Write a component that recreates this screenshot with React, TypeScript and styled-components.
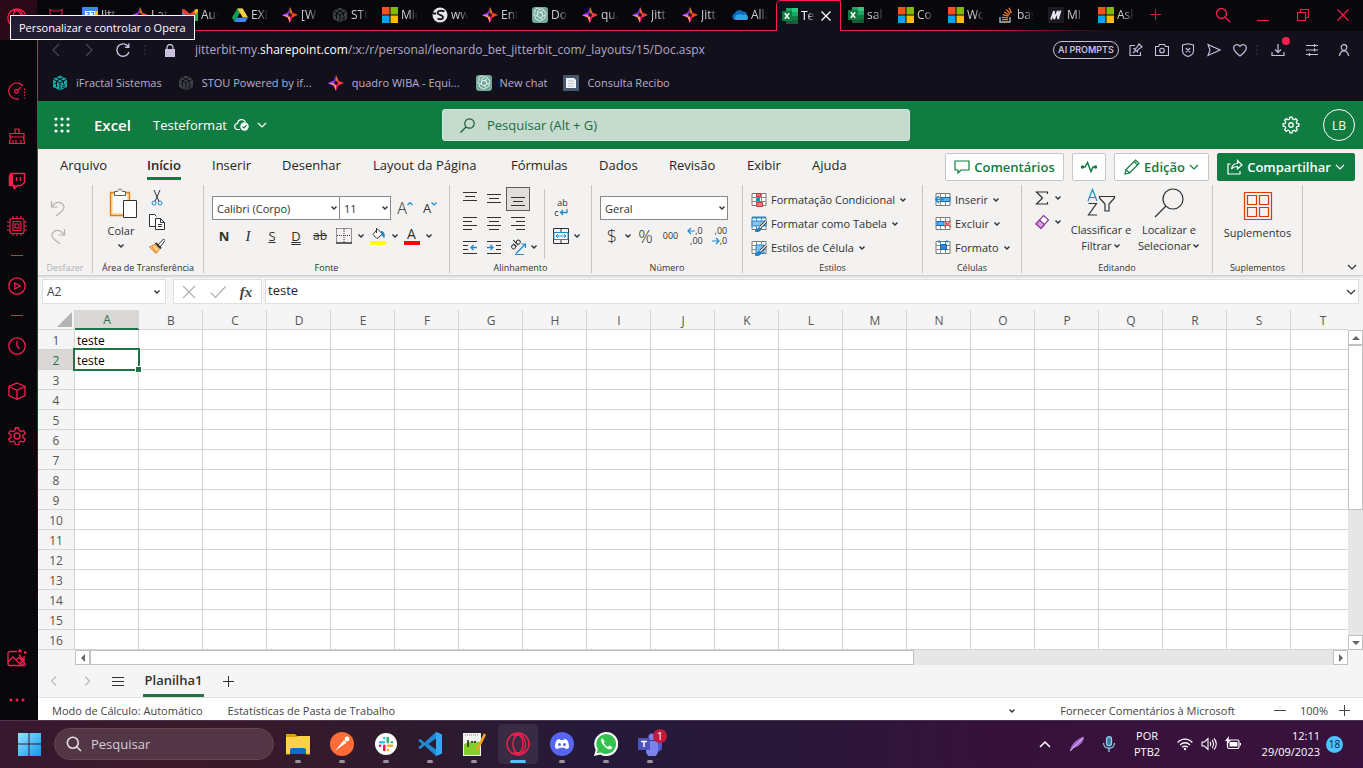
import React from 'react';
import styled, { createGlobalStyle, css } from 'styled-components';

const UI = `"Segoe UI", "Open Sans", "Noto Sans", sans-serif`;
const RED = '#fa1e4e';
const GREEN = '#107c41';
const LILAC = '#c9bfde';

const Global = createGlobalStyle`
  * { box-sizing: border-box; }
  body { margin: 0; font-family: ${UI}; background: #f5f5f5; overflow: hidden; }
  button, input, select { font: inherit; color: inherit; margin: 0; }
  button { background: none; border: 0; padding: 0; cursor: pointer; }
  a { color: inherit; text-decoration: none; }
  svg { display: block; flex: none; }
`;

/* ---------- generic icon ---------- */

type IconProps = {
  w?: number;
  h?: number;
  box?: string;
  stroke?: string;
  sw?: number;
  fill?: string;
  children: React.ReactNode;
};

const Icon = ({ w = 16, h, box, stroke = 'currentColor', sw = 1, fill = 'none', children }: IconProps) => (
  <svg
    width={w}
    height={h ?? w}
    viewBox={box ?? `0 0 ${w} ${h ?? w}`}
    fill={fill}
    stroke={stroke}
    strokeWidth={sw}
    aria-hidden="true"
  >
    {children}
  </svg>
);

const Chevron = ({ color = '#323130' }: { color?: string }) => (
  <Icon w={8} stroke={color} sw={1.4}><path d="M1.5 2.5 4 5l2.5-2.5" /></Icon>
);

const WideChevron = ({ color = 'currentColor' }: { color?: string }) => (
  <Icon w={10} stroke={color} sw={1.2}><path d="M1 3l4 4 4-4" /></Icon>
);

/* ---------- brand icons ---------- */

const Star = () => (
  <Icon w={16} stroke="none">
    <path d="M8 0 10.4 5.6 8 8 5.6 5.6Z" fill="#7a2bd8" />
    <path d="M8 0 10.4 5.6 8 8Z" fill="#e0662a" />
    <path d="M16 8 10.4 10.4 8 8l2.4-2.4Z" fill="#ff3a3a" />
    <path d="M8 16 5.6 10.4 8 8l2.4 2.4Z" fill="#e8186f" />
    <path d="M8 16 5.6 10.4 8 8Z" fill="#ff9a3c" />
    <path d="M0 8 5.6 5.6 8 8l-2.4 2.4Z" fill="#9b3cf0" />
    <path d="M0 8 8 8l-2.4 2.4Z" fill="#ff8a5c" />
    <circle cx="8" cy="8" r="1.8" fill="#12101a" />
  </Icon>
);

const Squares = () => (
  <Icon w={16} stroke="none">
    <path d="M0 0h7.5v7.5H0z" fill="#f8511d" />
    <path d="M8.5 0H16v7.5H8.5z" fill="#80bb01" />
    <path d="M0 8.5h7.5V16H0z" fill="#02a5f1" />
    <path d="M8.5 8.5H16V16H8.5z" fill="#ffbb02" />
  </Icon>
);

const Cube = ({ color, line = '#12101a' }: { color: string; line?: string }) => (
  <Icon w={16} stroke={line} sw={1}>
    <path d="M8 .5 15 4v8l-7 3.5L1 12V4Z" fill={color} stroke="none" />
    <path d="M8 15.5V8l7-4M8 8 1 4M4.5 2.5l7 3.5v3M11 2.5 4.5 6v6M10 11l3-1.5M10 13l3-1.500M2.5 8l2 1" />
  </Icon>
);

const ExcelIcon = () => (
  <Icon w={16} stroke="none">
    <path d="M4 0h12v16H4z" fill="#21a366" />
    <path d="M10 0h6v4h-6z" fill="#33c481" />
    <path d="M4 8h6v4H4zM4 4h6v4H4z" fill="#107c41" />
    <path d="M4 12h12v4H4z" fill="#185c37" />
    <path d="M10 8h6v4h-6z" fill="#107c41" />
    <path d="M0 3h10v10H0z" fill="#107c41" />
    <path d="m2.8 5.200 4.400 5.600M7.200 5.200l-4.400 5.600" stroke="#fff" strokeWidth="1.5" />
  </Icon>
);

const Knot = () => (
  <Icon w={16} stroke="#fff" sw={0.8}>
    <rect width="16" height="16" rx="3" fill="#74aa9c" stroke="none" />
    <path d="M8 2.5a2.5 2.5 0 0 1 4.200 1.800 2.600 2.600 0 0 1 .8 4.400 2.600 2.600 0 0 1-2.700 3.600A2.600 2.600 0 0 1 6 13a2.600 2.600 0 0 1-2.600-3.200A2.700 2.700 0 0 1 3.200 5.200 2.600 2.600 0 0 1 8 2.500Z" />
    <path d="M8 5.200 10.500 6.600v2.800L8 10.800 5.500 9.400V6.600ZM5.500 6.600V4.200L8 2.700M10.500 6.600 8.300 5.300l3-1.600M10.500 9.400 13 8M8 10.800l2.200 1.300M5.500 9.400 3.300 8" />
  </Icon>
);

const Calendar = () => (
  <Icon w={16} stroke="none">
    <rect width="16" height="16" rx="1" fill="#4285f4" />
    <path d="M3 4h10v9H3z" fill="#fff" />
    <path d="M13 4h3v9h-3z" fill="#fbbc04" />
    <path d="M4.5 5.5H7V8H5v3M9 5.500h2.500v5" stroke="#4285f4" fill="none" strokeWidth="1.2" />
  </Icon>
);

const Gmail = () => (
  <Icon w={16} stroke="none">
    <path d="M0 4v10h3.500V7Z" fill="#4285f4" />
    <path d="M16 4v10h-3.500V7Z" fill="#34a853" />
    <path d="M0 2.500 2 2l6 4.700L14 2l2 .5V5l-8 6-8-6Z" fill="#ea4335" />
    <path d="M12.500 3 14 2l2 .5V5l-3.500 2.600Z" fill="#fbbc04" />
  </Icon>
);

const Drive = () => (
  <Icon w={16} stroke="none">
    <path d="M5.300 1.500h5.400L5.300 10.800 2.600 15 0 10.600Z" fill="#0f9d58" />
    <path d="M5.300 1.500h5.400L16 10.600h-5.300Z" fill="#ffcd40" />
    <path d="M5.300 10.600H16L13.300 15H2.600Z" fill="#4285f4" />
    <path d="M8 6.300l2.500 4.300h-5Z" fill="#0a080e" />
  </Icon>
);

const Globe = () => (
  <Icon w={16} stroke="#15131c" sw={1.8}>
    <circle cx="8" cy="8" r="7.500" fill="#e8e8ea" stroke="none" />
    <path d="M12.500 4.500C9 3 5.500 4 5.500 6s5.500 1.800 5.500 4.200-3.500 2.500-5.500 1.300M1 6.500h3" />
  </Icon>
);

const Cloud = () => (
  <Icon w={16} stroke="none">
    <path d="M3.500 13A3.500 3.500 0 0 1 2.800 6.200 5 5 0 0 1 11 4.600 4 4 0 0 1 15 8.500L9 13Z" fill="#0f6cbd" />
    <path d="M4 13a3.300 3.300 0 0 1 0-4.500C6 7 9 7 11 8.200a3 3 0 0 1 5 2.200A2.600 2.600 0 0 1 13.300 13Z" fill="#28a8ea" />
  </Icon>
);

const Stack = () => (
  <Icon w={16} stroke="#f48024" sw={1.3}>
    <path d="M2 10v5h10v-5" stroke="#bcbbbb" />
    <path d="M4 12.700h6M4 10.300l6 .6M4.600 7.700l5.800 1.500M6 5l5.200 3M8 2.400l4.200 4.300M11 .8l2.400 5.300" />
  </Icon>
);

const Medium = () => (
  <Icon w={16} stroke="#e9e7ee" sw={1.8}>
    <rect width="16" height="16" fill="#1c1a22" stroke="none" />
    <path d="M3 12.500 6 4v8l4-8v8l2.500-8.500" />
  </Icon>
);

const Cat = () => (
  <Icon w={14} stroke="#d01a44" sw={1.2}>
    <path d="M1 7V1.500L4 3h6l3-1.500V7c0 3-2.500 5-6 5S1 10 1 7Z" />
  </Icon>
);

const Receipt = () => (
  <Icon w={16} stroke="none">
    <path d="M0 0h16v16H0z" fill="#47566a" />
    <path d="M3 3h8l2 2v8H3z" fill="#f3f3f3" />
    <path d="M5 5.500h6v1H5zM5 8h6v1H5zM5 10.500h6v1H5z" fill="#b9c2cc" />
  </Icon>
);

const OperaRing = ({ w = 22, sw = 1.3 }: { w?: number; sw?: number }) => (
  <Icon w={w} box="0 0 24 24" stroke={RED} sw={sw}>
    <circle cx="12" cy="12" r="11" />
    <ellipse cx="12" cy="12" rx="5" ry="9" />
    <path d="M7.500 4C11 .8 19 2 19.500 12S11 23.200 7.500 20" />
  </Icon>
);

/* ---------- window frame ---------- */

const Screen = styled.div`
  display: flex;
  flex-direction: column;
  height: 100vh;
`;

const Workspace = styled.div`
  flex: 1;
  display: flex;
  min-height: 0;
`;

const Sidebar = styled.nav`
  flex: none;
  width: 38px;
  display: flex;
  flex-direction: column;
  color: ${RED};
  background:
    linear-gradient(#e8204a, #8c1633 45%, #08070c 85%) right 30px / 1px 100% no-repeat,
    #08070c;
`;

const OperaButton = styled.button`
  position: relative;
  height: 40px;
  width: 37px;
  margin-bottom: 28px;
  padding: 8px 0 0 7px;
  display: flex;
  && { background: #2b0a17; padding: 8px 0 0 7px; }
`;

const Tooltip = styled.span`
  position: absolute;
  left: 10px;
  top: 15px;
  z-index: 5;
  height: 25px;
  padding: 0 8px;
  border: 1px solid #fff;
  background: #231d33;
  color: #fff;
  font-size: 11px;
  line-height: 23px;
  white-space: nowrap;
`;

const SideButton = styled.button<{ $short?: boolean }>`
  height: ${(p) => (p.$short ? 41 : 45)}px;
  width: 34px;
  display: grid;
  place-items: center;
`;

const SideDash = styled.hr`
  width: 12px;
  height: 1px;
  margin: 7px 0 7px 11px;
  border: 0;
  background: ${RED};
`;

const Spacer = styled.div`flex: 1;`;

const Content = styled.main`
  flex: 1;
  min-width: 0;
  display: flex;
  flex-direction: column;
`;

const TabStrip = styled.div`
  flex: none;
  height: 31px;
  display: flex;
  color: ${RED};
  background:
    linear-gradient(90deg, #e8204a 70%, #08070c 82%) left bottom / 100% 1px no-repeat,
    #08070c;
`;

const BrowserTab = styled.button<{ $active?: boolean }>`
  flex: none;
  width: 50px;
  height: 31px;
  padding-bottom: 1px;
  display: flex;
  align-items: center;
  gap: 3px;
  && {
    ${(p) => p.$active && css`
      width: 65px;
      margin: 0 7px 0 -6px;
      padding-left: 5px;
      border: 1px solid ${RED};
      border-bottom: 0;
      border-radius: 5px 2px 0 0;
      background: #12101a;
    `}
  }
`;

const TabTitle = styled.span<{ $active?: boolean }>`
  width: ${(p) => (p.$active ? 14 : 17)}px;
  overflow: hidden;
  white-space: nowrap;
  text-align: left;
  font-size: 12px;
  line-height: 16px;
  color: ${(p) => (p.$active ? '#fff' : '#cfccd6')};
  mask-image: linear-gradient(90deg, #000 45%, transparent);
`;

const PinnedTab = styled.button`
  width: 44px;
  display: flex;
  align-items: flex-start;
  && { padding: 8px 0 0 11px; }
`;

const TabClose = styled.span`
  margin-left: 3px;
  color: #fff;
`;

const StripButton = styled.button<{ $w: number }>`
  width: ${(p) => p.$w}px;
  height: 30px;
  display: grid;
  place-items: center;
`;

const AddressBar = styled.div`
  flex: none;
  height: 38px;
  display: flex;
  align-items: center;
  color: ${LILAC};
  background: #12101a;
  padding-right: 4px;
`;

const BarButton = styled.button<{ $w: number; $dim?: boolean }>`
  flex: none;
  position: relative;
  width: ${(p) => p.$w}px;
  height: 26px;
  display: grid;
  place-items: center;
  opacity: ${(p) => (p.$dim ? 0.3 : 1)};
`;

const Dot = styled.span`
  position: absolute;
  right: 5px;
  top: 0;
  width: 8px;
  height: 8px;
  border-radius: 50%;
  background: ${RED};
`;

const UrlText = styled.span`
  flex: 1;
  min-width: 0;
  overflow: hidden;
  white-space: nowrap;
  font-size: 12px;
  line-height: 20px;
  margin-left: 3px;
  color: #b3a8ca;
  b { font-weight: 400; color: #fff; }
`;

const Prompts = styled.button`
  flex: none;
  height: 18px;
  width: 66px;
  margin-right: 4px;
  font-family: Inter, "Open Sans", sans-serif;
  font-size: 9px;
  font-weight: 600;
  line-height: 16px;
  && { border: 1px solid ${LILAC}; border-radius: 9px; }
`;

const Bookmarks = styled.nav`
  flex: none;
  height: 32px;
  display: flex;
  padding: 0 0 4px 14px;
  gap: 16px;
  align-items: center;
  font-size: 11px;
  color: #b9aed2;
  background: #12101a;
`;

const Bookmark = styled.a`
  display: flex;
  align-items: center;
  gap: 8px;
  line-height: 18px;
  white-space: nowrap;
`;

/* ---------- Excel header ---------- */

const AppHeader = styled.header`
  flex: none;
  height: 48px;
  display: flex;
  align-items: center;
  color: #fff;
  background: ${GREEN};
`;

const HeaderLeft = styled.div`
  flex: none;
  width: 404px;
  display: flex;
  align-items: center;
  padding-left: 16px;
`;

const AppName = styled.a`
  margin-left: 24px;
  font-size: 15px;
  font-weight: 600;
  line-height: 20px;
  width: 59px;
`;

const DocName = styled.button`
  display: flex;
  align-items: center;
  gap: 7px;
  font-size: 13px;
  line-height: 20px;
`;

const SearchBox = styled.label`
  flex: 0 1 468px;
  height: 32px;
  display: flex;
  align-items: center;
  gap: 12px;
  padding: 0 17px;
  border: 1px solid #d9e8df;
  border-radius: 3px;
  background: #c5dbce;
  color: #1b5a37;
  input {
    flex: 1;
    min-width: 0;
    border: 0;
    padding: 0;
    outline: 0;
    background: none;
    font-size: 13px;
    line-height: 20px;
  }
  input::placeholder { color: #1e6b41; opacity: 1; }
`;

const HeaderRight = styled.div`
  margin-left: auto;
  display: flex;
  align-items: center;
  gap: 23px;
  padding-right: 8px;
`;

const Avatar = styled.button`
  width: 32px;
  height: 32px;
  font-size: 12px;
  && { border: 1px solid #fff; border-radius: 50%; }
`;

/* ---------- ribbon ---------- */

const Ribbon = styled.section`
  flex: none;
  position: relative;
  background: #f3f2f1;
  color: #323130;
  border-bottom: 1px solid #d2d0ce;
  box-shadow: 0 1px 2px rgba(0, 0, 0, 0.12);
`;

const RibbonTabs = styled.div`
  height: 36px;
  display: flex;
  padding-left: 22px;
`;

const RibbonTab = styled.button<{ $w: number; $active?: boolean }>`
  flex: none;
  width: ${(p) => p.$w}px;
  height: 31px;
  display: flex;
  font-size: 13px;
  color: #252423;
  white-space: nowrap;
  span {
    height: 31px;
    border-bottom: 3px solid ${(p) => (p.$active ? GREEN : 'transparent')};
    font-weight: ${(p) => (p.$active ? 600 : 400)};
    line-height: 32px;
  }
`;

const RibbonActions = styled.div`
  margin-left: auto;
  display: flex;
  gap: 8px;
  padding: 4px 8px 4px 0;
`;

const Action = styled.button<{ $w: number; $primary?: boolean }>`
  width: ${(p) => p.$w}px;
  height: 28px;
  display: flex;
  align-items: center;
  justify-content: center;
  gap: 4px;
  color: ${(p) => (p.$primary ? '#fff' : GREEN)};
  font-size: 13px;
  font-weight: 600;
  white-space: nowrap;
  && {
    border: 1px solid ${(p) => (p.$primary ? GREEN : '#c8c6c4')};
    border-radius: 2px;
    background: ${(p) => (p.$primary ? GREEN : '#fff')};
  }
`;

const RibbonBody = styled.div`
  display: flex;
  height: 90px;
`;

const Group = styled.div<{ $w: number; $dim?: boolean }>`
  flex: none;
  width: ${(p) => p.$w}px;
  height: 88px;
  display: flex;
  flex-direction: column;
  border-right: 1px solid #c8c6c4;
  color: ${(p) => (p.$dim ? '#b3b0ad' : '#323130')};
`;

const GroupBody = styled.div<{ $pad?: number }>`
  flex: 1;
  min-height: 0;
  display: flex;
  padding-left: ${(p) => p.$pad ?? 0}px;
`;

const GroupLabel = styled.span`
  text-align: center;
  font-size: 9px;
  line-height: 10px;
  white-space: nowrap;
`;

const Column = styled.div<{ $top?: number; $gap?: number }>`
  display: flex;
  flex-direction: column;
  padding-top: ${(p) => p.$top ?? 0}px;
  gap: ${(p) => p.$gap ?? 0}px;
`;

const Row = styled.div`
  display: flex;
  align-items: center;
`;

const Tool = styled.button<{ $w?: number; $on?: boolean }>`
  flex: none;
  width: ${(p) => p.$w ?? 24}px;
  height: 24px;
  display: grid;
  place-items: center;
  font-size: 14px;
  line-height: 20px;
  && {
    ${(p) => p.$on && css`
      border: 1px solid #605e5c;
      background: #e1dfdd;
    `}
  }
`;

type LetterKind = 'bold' | 'italic' | 'under' | 'double' | 'strike' | 'large' | 'small';

const Letter = styled.span<{ $kind: LetterKind }>`
  font-size: 13px;
  line-height: 16px;
  ${(p) => p.$kind === 'bold' && css`font-weight: 700;`}
  ${(p) => p.$kind === 'italic' && css`font-family: "Liberation Serif", serif; font-style: italic; font-size: 15px;`}
  ${(p) => p.$kind === 'under' && css`text-decoration: underline;`}
  ${(p) => p.$kind === 'double' && css`text-decoration: underline double;`}
  ${(p) => p.$kind === 'strike' && css`font-size: 12px; text-decoration: line-through;`}
  ${(p) => p.$kind === 'large' && css`font-size: 16px; font-weight: 300;`}
`;

const Swatch = styled.span<{ $c: string }>`
  width: 16px;
  height: 18px;
  display: flex;
  justify-content: center;
  font-size: 14px;
  line-height: 14px;
  border-bottom: 4px solid ${(p) => p.$c};
`;

const Big = styled.button<{ $w: number; $top: number; $gap?: number }>`
  width: ${(p) => p.$w}px;
  display: flex;
  flex-direction: column;
  align-items: center;
  align-self: flex-start;
  gap: ${(p) => p.$gap ?? 4}px;
  font-size: 11px;
  line-height: 16px;
  white-space: nowrap;
  && { padding-top: ${(p) => p.$top}px; }
`;

const Inline = styled.span`
  display: inline-flex;
  align-items: center;
  gap: 1px;
`;

const Picker = styled.label<{ $w: number }>`
  flex: none;
  width: ${(p) => p.$w}px;
  height: 24px;
  display: flex;
  align-items: center;
  border: 1px solid #8a8886;
  background: #fff;
  select {
    flex: 1;
    min-width: 0;
    height: 22px;
    border: 0;
    padding: 0 0 0 4px;
    appearance: none;
    background: none;
    font-size: 11px;
    outline: 0;
  }
  svg { margin: 0 1px; }
  & + & { margin-left: -1px; }
`;

const Command = styled.button`
  height: 24px;
  display: flex;
  align-items: center;
  gap: 4px;
  font-size: 11px;
  line-height: 16px;
  white-space: nowrap;
`;

const InnerRule = styled.span`
  width: 1px;
  margin: 4px 4px 0 6px;
  height: 70px;
  background: #c8c6c4;
`;

const Digits = styled.span<{ $size: number }>`
  font-size: ${(p) => p.$size}px;
  font-weight: ${(p) => (p.$size > 12 ? 300 : 400)};
  line-height: 20px;
`;

const TwoLine = styled.span`
  display: flex;
  flex-direction: column;
  align-items: flex-end;
  font-size: 9px;
  line-height: 12px;
  span { height: 10px; display: flex; align-items: center; }
`;

const Collapse = styled.button`
  margin-left: auto;
  align-self: flex-end;
  && { padding: 0 6px 3px 0; }
`;

/* ---------- formula bar ---------- */

const FormulaBar = styled.div`
  flex: none;
  display: flex;
  height: 34px;
  padding: 3px 4px 0;
  align-items: flex-start;
`;

const NameBox = styled.label`
  width: 124px;
  height: 25px;
  display: flex;
  align-items: center;
  border: 1px solid #e1dfdd;
  background: #fff;
  padding: 0 4px;
  input {
    flex: 1;
    min-width: 0;
    border: 0;
    padding: 0;
    outline: 0;
    font-size: 12px;
    color: #444;
  }
`;

const FxBox = styled.div`
  width: 89px;
  height: 25px;
  margin: 0 3px 0 7px;
  display: flex;
  align-items: center;
  border: 1px solid #e1dfdd;
  background: #fff;
`;

const FxLabel = styled.span`
  font-family: "Liberation Serif", serif;
  font-style: italic;
  font-weight: 700;
  font-size: 15px;
  line-height: 20px;
  color: #444;
`;

const FormulaInput = styled.label`
  flex: 1;
  height: 25px;
  display: flex;
  align-items: center;
  border: 1px solid #e1dfdd;
  background: #fff;
  padding: 0 2px;
  input {
    flex: 1;
    min-width: 0;
    border: 0;
    padding: 0 0 3px;
    outline: 0;
    font-size: 13px;
    line-height: 20px;
    color: #252423;
  }
`;

/* ---------- grid ---------- */

const GridArea = styled.div`
  flex: 1;
  min-height: 0;
  display: flex;
`;

const GridClip = styled.div`
  flex: 1;
  min-width: 0;
  overflow: hidden;
`;

const Sheet = styled.table`
  table-layout: fixed;
  width: 1317px;
  border-collapse: separate;
  border-spacing: 0;
  font-size: 12px;
`;

const line = '1px solid #d4d4d4';

const ColHead = styled.th<{ $on?: boolean }>`
  height: 20px;
  padding: 1px 0 0 1px;
  font-weight: 400;
  line-height: 17px;
  color: ${(p) => (p.$on ? '#217346' : '#555')};
  background: ${(p) => (p.$on ? '#d9d8d6' : '#f5f5f5')};
  border-right: ${line};
  border-bottom: ${(p) => (p.$on ? '2px solid #217346' : line)};
`;

const Corner = styled.th`
  width: 37px;
  padding: 0;
  background: #f5f5f5;
  border-right: ${line};
  border-bottom: ${line};
  svg { margin: 0 2px 0 auto; }
`;

const RowHead = styled.th<{ $on?: boolean }>`
  height: 20px;
  padding: 2px 0 0;
  font-weight: 400;
  line-height: 17px;
  color: ${(p) => (p.$on ? '#217346' : '#555')};
  background: ${(p) => (p.$on ? '#d9d8d6' : '#f5f5f5')};
  border-right: ${line};
  border-bottom: ${line};
`;

const Cell = styled.td<{ $on?: boolean }>`
  height: 20px;
  padding: 2px 0 0 2px;
  line-height: 17px;
  background: #fff;
  color: #000;
  border-right: ${line};
  border-bottom: ${line};
  ${(p) => p.$on && css`
    position: relative;
    &::before {
      content: '';
      position: absolute;
      inset: -2px;
      border: 2px solid #217346;
    }
    &::after {
      content: '';
      position: absolute;
      right: -3px;
      bottom: -3px;
      width: 5px;
      height: 5px;
      background: #217346;
      outline: 1px solid #fff;
    }
  `}
`;

const VScroll = styled.div`
  flex: none;
  width: 15px;
  margin-top: 20px;
  display: flex;
  flex-direction: column;
  background: #e6e6e6;
`;

const HScroll = styled.div`
  flex: none;
  height: 15px;
  margin: 0 15px 0 37px;
  display: flex;
  background: #e6e6e6;
`;

const ScrollButton = styled.button`
  flex: none;
  width: 15px;
  height: 15px;
  display: grid;
  place-items: center;
  && { border: 1px solid #c0c0c0; background: #fff; }
`;

const Thumb = styled.span<{ $vertical?: boolean }>`
  flex: 0 1 ${(p) => (p.$vertical ? 165 : 824)}px;
  border: 1px solid #c0c0c0;
  background: #fff;
`;

const SheetTabs = styled.div`
  flex: none;
  height: 33px;
  display: flex;
  align-items: center;
  border-bottom: 1px solid #e1dfdd;
  color: #323130;
`;

const SheetTool = styled.button<{ $w: number; $dim?: boolean }>`
  width: ${(p) => p.$w}px;
  height: 32px;
  display: grid;
  place-items: center;
  color: ${(p) => (p.$dim ? '#bdbbb8' : '#323130')};
`;

const SheetTab = styled.button`
  align-self: flex-start;
  height: 32px;
  width: 61px;
  font-size: 13px;
  font-weight: 600;
  line-height: 29px;
  white-space: nowrap;
  && { margin-left: 10px; padding-top: 1px; border-bottom: 3px solid #217346; }
`;

const StatusBar = styled.footer`
  flex: none;
  height: 22px;
  display: flex;
  align-items: center;
  padding: 4px 12px 0 14px;
  font-size: 11px;
  line-height: 18px;
  color: #444;
  background: #fff;
`;

const StatusButton = styled.button<{ $gap?: number }>`
  white-space: nowrap;
  && { margin-left: ${(p) => p.$gap ?? 0}px; }
`;

/* ---------- taskbar ---------- */

const Taskbar = styled.footer`
  flex: none;
  height: 48px;
  display: flex;
  align-items: center;
  color: #fff;
  box-shadow: inset 0 1px #4a3550;
  background: linear-gradient(90deg, #371830 0, #3b1a28 14%, #2e1a2e 31%, #25193a 44%, #2a1838 58%, #36123b 72%, #38123c 100%);
  padding-left: 17px;
`;

const StartButton = styled.button`
  width: 24px;
  && { margin-right: 13px; }
`;

const TaskSearch = styled.label`
  width: 220px;
  height: 32px;
  display: flex;
  align-items: center;
  gap: 9px;
  padding: 0 11px;
  margin-right: 2px;
  border: 1px solid #634652;
  border-radius: 16px;
  background: #533646;
  input {
    flex: 1;
    min-width: 0;
    border: 0;
    padding: 0;
    outline: 0;
    background: none;
    font-size: 13px;
  }
  input::placeholder { color: #d8ced4; opacity: 1; }
`;

const TaskApp = styled.button<{ $active?: boolean }>`
  position: relative;
  width: 40px;
  height: 40px;
  display: grid;
  place-items: center;
  border-radius: 4px;
  && {
    margin: 0 2px;
    background: ${(p) => (p.$active ? 'rgba(255,255,255,0.08)' : 'none')};
  }
  &::after {
    content: '';
    position: absolute;
    left: ${(p) => (p.$active ? 12 : 17)}px;
    bottom: 1px;
    width: ${(p) => (p.$active ? 16 : 6)}px;
    height: 3px;
    border-radius: 2px;
    background: ${(p) => (p.$active ? '#4cc2ff' : '#9d929f')};
  }
`;

const AlertBadge = styled.span`
  position: absolute;
  right: 3px;
  top: 5px;
  width: 14px;
  height: 14px;
  border-radius: 50%;
  background: #c4183c;
  font-size: 11px;
  line-height: 14px;
`;

const Tray = styled.div`
  margin-left: auto;
  display: flex;
  align-items: center;
  padding-right: 20px;
`;

const TrayButton = styled.button<{ $w: number }>`
  width: ${(p) => p.$w}px;
  height: 40px;
  display: grid;
  place-items: center;
`;

const TrayText = styled.button<{ $right?: boolean; $w: number }>`
  width: ${(p) => p.$w}px;
  text-align: ${(p) => (p.$right ? 'right' : 'center')};
  font-size: 11px;
  line-height: 16px;
`;

const Count = styled.span`
  width: 17px;
  height: 17px;
  margin-left: 6px;
  border-radius: 50%;
  background: #4cc2ff;
  color: #123;
  font-size: 10px;
  line-height: 17px;
  text-align: center;
`;

/* ---------- data ---------- */

const tabsBefore: [string, React.ReactNode][] = [
  ['Jitt', <Calendar />], ['Lat', <Star />], ['Auc', <Gmail />], ['EXF', <Drive />],
  ['[W', <Star />], ['STC', <Cube color="#3c4145" line="#0a080e" />], ['Mic', <Squares />], ['ww', <Globe />],
  ['Ent', <Star />], ['Do', <Knot />], ['qua', <Star />], ['Jitt', <Star />], ['Jitt', <Star />], ['Alla', <Cloud />],
];

const tabsAfter: [string, React.ReactNode][] = [
  ['sal', <ExcelIcon />], ['Co', <Squares />], ['Wo', <Squares />], ['bas', <Stack />], ['MI', <Medium />], ['Ask', <Squares />],
];

const bookmarks: [string, React.ReactNode][] = [
  ['iFractal Sistemas', <Cube color="#14a8a0" />],
  ['STOU Powered by if...', <Cube color="#3c4145" />],
  ['quadro WIBA - Equi...', <Star />],
  ['New chat', <Knot />],
  ['Consulta Recibo', <Receipt />],
];

const ribbonTabs: [string, number][] = [
  ['Arquivo', 87], ['Início', 65], ['Inserir', 70], ['Desenhar', 91], ['Layout da Página', 138],
  ['Fórmulas', 88], ['Dados', 70], ['Revisão', 78], ['Exibir', 65], ['Ajuda', 50],
];

const columns = 'ABCDEFGHIJKLMNOPQRST'.split('');
const rows = Array.from({ length: 16 }, (_, i) => i + 1);
const cells: Record<string, string> = { A1: 'teste', A2: 'teste' };

/* ---------- ribbon drawings ---------- */

const INK = '#323130';
const BLUE = '#1e8bcd';

const Lines = ({ x, y }: { x: number[][]; y: number }) => (
  <Icon w={16} stroke={INK}>
    {x.map(([a, b], i) => <path key={i} d={`M${a} ${y + i * 4 + 0.5}H${b}`} />)}
  </Icon>
);

const TableIcon = ({ children }: { children: React.ReactNode }) => (
  <Icon w={16}>
    <path d="M1 1.5h14v12H1z" stroke="#7a7876" fill="#fff" />
    <path d="M1 5.5h14M1 9.5h14M5.5 1v13M10.5 1v13" stroke="#8a8886" />
    {children}
  </Icon>
);

const Brush = () => (
  <>
    <path d="M15 5.5 9.500 11" stroke={INK} strokeWidth="3" />
    <path d="M15 5.5 9.500 11" stroke="#fff" strokeWidth="1.2" />
    <path d="M4 15c2 0 2-3 4.500-3.500l1.500 1.500C9.500 15.500 6 16 4 15Z" fill={BLUE} stroke="#0f6cbd" />
  </>
);

const App = () => (
  <Screen>
    <Global />
    <Workspace>
      <Sidebar>
        <OperaButton aria-label="Opera">
          <OperaRing w={20} sw={1.5} />
          <Tooltip>Personalizar e controlar o Opera</Tooltip>
        </OperaButton>
        <SideButton aria-label="Velocidade">
          <Icon w={18} sw={1.2}>
            <path d="M11 16.700A8 8 0 1 1 15 4" /><path d="M16.500 6.500v10" strokeDasharray="1.500 1.500" />
            <circle cx="8.500" cy="9.500" r="1.800" /><path d="m9.800 8.200 3-3" />
          </Icon>
        </SideButton>
        <SideButton aria-label="Limpeza">
          <Icon w={18} sw={1.2}>
            <path d="M7 6.500V2h4v4.500M2 6.500h14v3.500H2zM2.500 10 1.500 16.500h15L15.500 10M5 13v3M8 13v3M13 13v3" />
          </Icon>
        </SideButton>
        <SideButton aria-label="Twitch">
          <Icon w={18} sw={1.5}>
            <path d="M3 1.500h13.500v9L13 13.500H9.500l-3 3v-3H1.500V4Z" /><path d="M2 2h3v11h2v4l-2-1v-2H1V4Z" fill={RED} stroke="none" /><path d="M8.500 5v4M12.500 5v4" />
          </Icon>
        </SideButton>
        <SideButton aria-label="Controle">
          <Icon w={20} sw={1.1}>
            <rect x="3" y="2.500" width="14" height="15" rx="2" /><rect x="6" y="5.500" width="8" height="9" rx="1" /><rect x="8" y="8" width="4" height="4" />
            <path d="M6 0v3M10 0v3M14 0v3M6 17v3M10 17v3M14 17v3M0 6h3M0 10h3M0 14h3M17 6h3M17 10h3M17 14h3" />
          </Icon>
        </SideButton>
        <SideDash />
        <SideButton aria-label="Player">
          <Icon w={18} sw={1.3}><circle cx="9" cy="9" r="8.200" /><path d="m6.800 6 5.500 3-5.500 3Z" /></Icon>
        </SideButton>
        <SideDash />
        <SideButton aria-label="Histórico">
          <Icon w={18} sw={1.3}><circle cx="9" cy="9" r="8.200" /><path d="M9 4v5l2.500 3" /></Icon>
        </SideButton>
        <SideButton aria-label="Extensões">
          <Icon w={18} sw={1.3}><path d="M9 1 17 4.500v9L9 17.300 1 13.500v-9ZM1 4.500l8 3.800 8-3.800M9 8.300v9" /></Icon>
        </SideButton>
        <SideButton aria-label="Configurações">
          <Icon w={18} box="0 0 24 24" sw={1.7}>
            <circle cx="12" cy="12" r="4" />
            <path d="M9.200 4.800 9.900 1h4.200l.7 3.800 2.400 1.400 3.700-1.300 2.100 3.700-3 2.500v2.800l3 2.500-2.100 3.700-3.700-1.300-2.400 1.400-.7 3.800H9.900l-.7-3.800-2.400-1.400-3.700 1.300L1 16.400l3-2.500v-2.800L1 8.600l2.100-3.700 3.700 1.300Z" />
          </Icon>
        </SideButton>
        <Spacer />
        <SideButton $short aria-label="Papel de parede">
          <Icon w={20} sw={1.3}>
            <path d="M10 2.500H3a2 2 0 0 0-2 2v10a2 2 0 0 0 2 2h14l-4-4M1 13l5-5 8 8M9 11l3-2.500 7 7.500M12 5.500l5 6.500V7" /><path d="M13 0v4M11 2h4M17 3.500h2.500M18.200 2v3" />
          </Icon>
        </SideButton>
        <SideButton $short aria-label="Mais">
          <Icon w={16} stroke="none" fill={RED}><circle cx="2" cy="8" r="1.500" /><circle cx="8" cy="8" r="1.500" /><circle cx="14" cy="8" r="1.500" /></Icon>
        </SideButton>
      </Sidebar>

      <Content>
        <TabStrip>
          <PinnedTab aria-label="GX"><Cat /></PinnedTab>
          {tabsBefore.map(([t, icon], i) => (
            <BrowserTab key={i}>{icon}<TabTitle>{t}</TabTitle></BrowserTab>
          ))}
          <BrowserTab $active>
            <ExcelIcon /><TabTitle $active>Tes</TabTitle>
            <TabClose><Icon w={10} sw={1.3}><path d="m.5.5 9 9M9.500.5l-9 9" /></Icon></TabClose>
          </BrowserTab>
          {tabsAfter.map(([t, icon], i) => (
            <BrowserTab key={i}>{icon}<TabTitle>{t}</TabTitle></BrowserTab>
          ))}
          <StripButton $w={16} aria-label="Nova guia"><Icon w={12} stroke="#c91c42"><path d="M5.500 0v11M0 5.500h11" /></Icon></StripButton>
          <Spacer />
          <StripButton $w={40} aria-label="Pesquisar"><Icon w={16} sw={1.3}><circle cx="6.500" cy="6.500" r="5" /><path d="m10.200 10.200 5 5" /></Icon></StripButton>
          <StripButton $w={40} aria-label="Minimizar"><Icon w={12} sw={1.2}><path d="M0 11.500h12" /></Icon></StripButton>
          <StripButton $w={40} aria-label="Restaurar"><Icon w={12} sw={1.2}><path d="M.5 3.500h8v8h-8zM3.500 3.500v-3h8v8h-3" /></Icon></StripButton>
          <StripButton $w={40} aria-label="Fechar"><Icon w={12} sw={1.2}><path d="m.5.5 11 11M11.500.5l-11 11" /></Icon></StripButton>
        </TabStrip>

        <AddressBar>
          <BarButton $w={36} $dim aria-label="Voltar"><Icon w={14} sw={1.2}><path d="M10 1 4 7l6 6" /></Icon></BarButton>
          <BarButton $w={30} $dim aria-label="Avançar"><Icon w={14} sw={1.2}><path d="m4 1 6 6-6 6" /></Icon></BarButton>
          <BarButton $w={38} aria-label="Recarregar"><Icon w={14} sw={1.4}><path d="M12.500 4A6.200 6.200 0 1 0 13 9M12.800.5v3.800H9" /></Icon></BarButton>
          <BarButton $w={6} $dim aria-label="Separador"><Icon w={2} h={10} stroke="none" fill="#534a70"><path d="M0 0h2v2H0zM0 4h2v2H0zM0 8h2v2H0z" /></Icon></BarButton>
          <BarButton $w={44} aria-label="Segurança"><Icon w={10} h={13} stroke="none" fill={LILAC}><path d="M0 5h10v8H0z" /><path d="M2 6V3.500a3 3 0 0 1 6 0V6" fill="none" stroke={LILAC} strokeWidth="1.3" /></Icon></BarButton>
          <UrlText>jitterbit-my.<b>sharepoint.com</b>/:x:/r/personal/leonardo_bet_jitterbit_com/_layouts/15/Doc.aspx</UrlText>
          <Prompts>AI PROMPTS</Prompts>
          <BarButton $w={26} aria-label="Fixar"><Icon w={14} sw={1.1}><path d="M6 2.500H1v10h10.500V9M4 10l2.500-2.500M5 5.500 8.500 9l.5-2.500L13 4 10 1 7.500 5Z" /></Icon></BarButton>
          <BarButton $w={26} aria-label="Captura"><Icon w={14} sw={1.1}><path d="M.5 3.500h3l1-2h5l1 2h3v9H.5z" /><circle cx="7" cy="7.500" r="2.300" /></Icon></BarButton>
          <BarButton $w={26} aria-label="Bloqueador"><Icon w={14} sw={1.1}><path d="M7 .8 12.500 2v6c0 3-2.500 4.500-5.500 5.500C4 12.500 1.500 11 1.500 8V2ZM4.800 5l4.400 4.400M9.200 5 4.800 9.400" /></Icon></BarButton>
          <BarButton $w={26} aria-label="Enviar"><Icon w={14} sw={1.1}><path d="M1 1.500 13 7 1 12.500 3 7Z" /></Icon></BarButton>
          <BarButton $w={26} aria-label="Favorito"><Icon w={14} sw={1.2}><path d="M7 13C3 10 .7 7.500.7 4.700.7 1.500 5 .5 7 3.500 9 .5 13.300 1.500 13.300 4.700 13.300 7.500 11 10 7 13Z" /></Icon></BarButton>
          <BarButton $w={8} $dim aria-label="Separador"><Icon w={2} h={10} stroke="none" fill="#534a70"><path d="M0 0h2v2H0zM0 4h2v2H0zM0 8h2v2H0z" /></Icon></BarButton>
          <BarButton $w={34} aria-label="Downloads"><Icon w={14} sw={1.2}><path d="M1 9v3.500h12V9M7 1v8.500M4 6.500l3 3 3-3" /></Icon><Dot /></BarButton>
          <BarButton $w={34} aria-label="Ajustes"><Icon w={14} sw={1.2}><path d="M1 2.500h12M1 7h12M1 11.500h12M9.500 1v3M9.500 5.500v3M4.500 10v3" /></Icon></BarButton>
          <BarButton $w={30} aria-label="Perfil"><Icon w={14} sw={1.2}><circle cx="7" cy="4.500" r="2.800" /><path d="M2.500 13C2.800 10 4 7.800 7 7.800s4.200 2.200 4.500 5.200" /></Icon></BarButton>
        </AddressBar>

        <Bookmarks>
          {bookmarks.map(([t, icon]) => <Bookmark key={t} href="#">{icon}{t}</Bookmark>)}
        </Bookmarks>

        <AppHeader>
          <HeaderLeft>
            <button aria-label="Aplicativos">
              <Icon w={16} stroke="none" fill="#fff">
                {[2, 8, 14].map((y) => [2, 8, 14].map((x) => <circle key={`${x}-${y}`} cx={x} cy={y} r="1.6" />))}
              </Icon>
            </button>
            <AppName href="#">Excel</AppName>
            <DocName>
              Testeformat
              <Icon w={16} stroke="#fff" sw={1.2}>
                <path d="M6 12.500H4a3 3 0 0 1-.5-6A4.200 4.200 0 0 1 11.500 5" /><circle cx="10.500" cy="9.500" r="4.200" fill="#fff" stroke="none" /><path d="m8.500 9.500 1.500 1.500 2.600-2.800" stroke={GREEN} />
              </Icon>
              <WideChevron />
            </DocName>
          </HeaderLeft>
          <SearchBox>
            <Icon w={15} sw={1.2}><circle cx="9.500" cy="5.500" r="4.700" /><path d="M6 9 .5 14.500" /></Icon>
            <input placeholder="Pesquisar (Alt + G)" aria-label="Pesquisar" />
          </SearchBox>
          <HeaderRight>
            <button aria-label="Configurações">
              <Icon w={18} box="0 0 24 24" stroke="#fff" sw={1.7}>
                <circle cx="12" cy="12" r="3" />
                <path d="M10 4.200 10.500 1.500h3l.5 2.700 2 .8 2.300-1.500 2.200 2.200L19 8l.8 2 2.700.5v3l-2.700.5-.8 2 1.500 2.300-2.200 2.200L16 19l-2 .8-.5 2.700h-3l-.5-2.700-2-.8-2.300 1.500-2.200-2.200L5 16l-.8-2-2.700-.5v-3l2.700-.5L5 8 3.500 5.700l2.200-2.200L8 5Z" />
              </Icon>
            </button>
            <Avatar>LB</Avatar>
          </HeaderRight>
        </AppHeader>

        <Ribbon>
          <RibbonTabs>
            {ribbonTabs.map(([t, w]) => <RibbonTab key={t} $w={w} $active={t === 'Início'}><span>{t}</span></RibbonTab>)}
            <RibbonActions>
              <Action $w={119}><Icon w={16} sw={1.2}><path d="M1 2h14v9H7l-3 3v-3H1Z" /></Icon>Comentários</Action>
              <Action $w={34} aria-label="Atividade"><Icon w={16} sw={1.5}><circle cx="1.500" cy="8" r="1" fill={GREEN} /><circle cx="14.500" cy="8" r="1" fill={GREEN} /><path d="M2 8h2l2.500-4.500 3.500 9L12 8h2" /></Icon></Action>
              <Action $w={95}><Icon w={16} sw={1.2}><path d="M1 15 2 10.500 11.500 1 15 4.500 5.500 14ZM10 2.500 13.500 6M2 10.500 5.500 14" /></Icon>Edição<WideChevron /></Action>
              <Action $w={138} $primary><Icon w={16} sw={1.2}><path d="M3.500 5H1v10h12v-3M4.500 10C5 6.500 7 4.500 10.500 4.500V1.500L15 6l-4.500 4V7.500C8 7.500 6 8 4.500 10Z" /></Icon>Compartilhar<WideChevron /></Action>
            </RibbonActions>
          </RibbonTabs>

          <RibbonBody>
            <Group $w={55} $dim>
              <GroupBody $pad={8}>
                <Column $top={11} $gap={4}>
                  <Tool aria-label="Desfazer"><Icon w={16} sw={1.2}><path d="M1.500 1v6h6M1.500 7C5 2.500 9 1.500 12 3.500c3.500 2.500 2 6-1 8.500L6 16" /></Icon></Tool>
                  <Tool aria-label="Refazer"><Icon w={16} sw={1.2}><path d="M14.500 1v6h-6M14.500 7C11 2.500 7 1.500 4 3.500c-3.500 2.500-2 6 1 8.500l5 4" /></Icon></Tool>
                </Column>
              </GroupBody>
              <GroupLabel>Desfazer</GroupLabel>
            </Group>

            <Group $w={111}>
              <GroupBody $pad={8}>
                <Big $w={40} $top={3} $gap={3}>
                  <Icon w={34} h={32} box="-5 0 34 32">
                    <path d="M1.500 4.500h19v23h-19z" stroke="#e07b16" fill="#fde1a8" strokeWidth="1.5" /><path d="M4 7h14v18H4z" fill="#fafafa" stroke="none" />
                    <path d="M5.500 7.500v-4h3C9 .5 13 .5 13.500 3.500h3v4Z" stroke="#605e5c" fill="#fff" /><path d="M14.500 12.500h13v17h-13z" stroke={INK} fill="#fff" />
                  </Icon>
                  Colar
                  <Chevron />
                </Big>
                <Column $top={1}>
                  <Tool $w={32} aria-label="Recortar"><Icon w={16}><path d="M5 0l5 11.500M11 0 6 11.500" stroke={INK} /><circle cx="5" cy="13" r="2" stroke={BLUE} /><circle cx="11" cy="13" r="2" stroke={BLUE} /></Icon></Tool>
                  <Tool $w={32} aria-label="Copiar"><Icon w={16} stroke={INK}><path d="M6 12.500H.5V.5h5l2 2M6.500 4.500h5l4 4v7h-9zM11.500 4.500v4h4M9 10.500h4M9 12.500h4" fill="#fff" /></Icon></Tool>
                  <Tool $w={32} aria-label="Pincel"><Icon w={16}><path d="m9 7 5.500-6L16 2.500 11 9" stroke={INK} fill="#fff" /><path d="m6.500 5 5.500 5.500" stroke={INK} strokeWidth="2" /><path d="M6 6.500 10.500 11 7 15.500.5 9Z" fill="#fbd28c" stroke="#e07b16" /><path d="m3 9 4 5" stroke="#e07b16" /></Icon></Tool>
                </Column>
              </GroupBody>
              <GroupLabel>Área de Transferência</GroupLabel>
            </Group>

            <Group $w={246}>
              <GroupBody $pad={8}>
                <Column $top={11} $gap={4}>
                  <Row>
                    <Picker $w={128}><select aria-label="Fonte"><option>Calibri (Corpo)</option></select><Chevron /></Picker>
                    <Picker $w={52}><select aria-label="Tamanho"><option>11</option></select><Chevron /></Picker>
                    <Tool $w={28} aria-label="Aumentar fonte"><Row><Letter $kind="large">A</Letter><Icon w={6} h={14} stroke={BLUE} sw={1.2}><path d="m.5 4 2.500-2.500L5.500 4" /></Icon></Row></Tool>
                    <Tool $w={22} aria-label="Diminuir fonte"><Row><Letter $kind="small">A</Letter><Icon w={6} h={14} stroke={BLUE} sw={1.2}><path d="m.5 1.500 2.500 2.500 2.500-2.500" /></Icon></Row></Tool>
                  </Row>
                  <Row>
                    <Tool aria-label="Negrito"><Letter $kind="bold">N</Letter></Tool>
                    <Tool aria-label="Itálico"><Letter $kind="italic">I</Letter></Tool>
                    <Tool aria-label="Sublinhado"><Letter $kind="under">S</Letter></Tool>
                    <Tool aria-label="Sublinhado duplo"><Letter $kind="double">D</Letter></Tool>
                    <Tool aria-label="Tachado"><Letter $kind="strike">ab</Letter></Tool>
                    <Tool aria-label="Bordas"><Icon w={16} stroke={INK}><path d="M.5.5h15v14M.5.5v14M8 1v13M1 7.500h14" strokeDasharray="1 1" /><path d="M0 15h16" strokeWidth="1.5" /></Icon></Tool>
                    <Tool $w={10} aria-label="Opções de bordas"><Chevron /></Tool>
                    <Tool $w={24} aria-label="Preenchimento"><Swatch $c="#ffff00"><Icon w={14} stroke={INK}><path d="m6.500 2 5 5L6 11.500l-4-4Z" fill="#fff" /><path d="M5.500 1v5" /><path d="M10 4.500c3 0 3.500 2 3 6l-2-3Z" fill={BLUE} stroke={BLUE} /></Icon></Swatch></Tool>
                    <Tool $w={9} aria-label="Cores"><Chevron /></Tool>
                    <Tool $w={25} aria-label="Cor da fonte"><Swatch $c="#ff0000">A</Swatch></Tool>
                    <Tool $w={9} aria-label="Cores da fonte"><Chevron /></Tool>
                  </Row>
                </Column>
              </GroupBody>
              <GroupLabel>Fonte</GroupLabel>
            </Group>

            <Group $w={142}>
              <GroupBody $pad={8}>
                <Column $top={2}>
                  <Row>
                    <Tool aria-label="Superior"><Lines y={1} x={[[1, 15], [3, 13], [1, 15]]} /></Tool>
                    <Tool aria-label="Meio"><Lines y={3} x={[[1, 15], [3, 13], [1, 15]]} /></Tool>
                    <Tool $on aria-label="Inferior"><Lines y={6} x={[[1, 15], [3, 13], [1, 15]]} /></Tool>
                  </Row>
                  <Row>
                    <Tool aria-label="Esquerda"><Lines y={2} x={[[1, 15], [1, 10], [1, 15], [1, 10]]} /></Tool>
                    <Tool aria-label="Centro"><Lines y={2} x={[[1, 15], [3, 13], [1, 15], [3, 13]]} /></Tool>
                    <Tool aria-label="Direita"><Lines y={2} x={[[1, 15], [6, 15], [1, 15], [6, 15]]} /></Tool>
                  </Row>
                  <Row>
                    <Tool aria-label="Diminuir recuo"><Icon w={16}><path d="M1 2.500h14M1 6.500h5M1 10.500h5M1 14.500h14" stroke={INK} /><path d="M9 8.500h6M11.500 6 9 8.500l2.500 2.500" stroke={BLUE} strokeWidth="1.3" /></Icon></Tool>
                    <Tool aria-label="Aumentar recuo"><Icon w={16}><path d="M1 2.500h14M10 6.500h5M10 10.500h5M1 14.500h14" stroke={INK} /><path d="M1 8.500h6M4.500 6 7 8.500 4.500 11" stroke={BLUE} strokeWidth="1.3" /></Icon></Tool>
                    <Tool aria-label="Orientação">
                      <Icon w={18}>
                        <g stroke={INK} transform="rotate(-45 6 6)"><circle cx="3" cy="7" r="2" /><path d="M5.200 4.500V9M7.500 2v7" /><circle cx="9.700" cy="7" r="2" /></g>
                        <path d="m7 15.500 9-9M16.500 10V6h-4M6 16.500h9" stroke={BLUE} strokeWidth="1.2" />
                      </Icon>
                    </Tool>
                    <Tool $w={8} aria-label="Opções de orientação"><Chevron /></Tool>
                  </Row>
                </Column>
                <InnerRule />
                <Column $top={11} $gap={4}>
                  <Tool aria-label="Quebrar texto">
                    <TwoLine><span>ab</span><span>c<Icon w={9} h={8} stroke={BLUE} sw={1.3}><path d="M8 0v3.500H1.500M4 1 1.500 3.500 4 6" /></Icon></span></TwoLine>
                  </Tool>
                  <Row>
                    <Tool aria-label="Mesclar"><Icon w={16}><path d="M.5.5h15v15H.5zM8 .5v4M8 11.500v4" stroke={INK} /><path d="M1 4.500h14v7H1z" fill="#fff" stroke={BLUE} /><path d="M3 8h10M5 6 3 8l2 2M11 6l2 2-2 2" stroke={BLUE} /></Icon></Tool>
                    <Tool $w={8} aria-label="Opções de mesclagem"><Chevron /></Tool>
                  </Row>
                </Column>
              </GroupBody>
              <GroupLabel>Alinhamento</GroupLabel>
            </Group>

            <Group $w={151}>
              <GroupBody $pad={8}>
                <Column $top={11} $gap={4}>
                  <Picker $w={128}><select aria-label="Formato de número"><option>Geral</option></select><Chevron /></Picker>
                  <Row>
                    <Tool aria-label="Moeda"><Digits $size={18}>$</Digits></Tool>
                    <Tool $w={8} aria-label="Moedas"><Chevron /></Tool>
                    <Tool $w={27} aria-label="Porcentagem"><Digits $size={18}>%</Digits></Tool>
                    <Tool $w={23} aria-label="Milhares"><Digits $size={9}>000</Digits></Tool>
                    <Tool $w={26} aria-label="Mais casas"><TwoLine><span><Icon w={8} stroke={BLUE} sw={1.2}><path d="M8 4H1M4 1 1 4l3 3" /></Icon>,0</span><span>,00</span></TwoLine></Tool>
                    <Tool $w={23} aria-label="Menos casas"><TwoLine><span>,00</span><span><Icon w={8} stroke={BLUE} sw={1.2}><path d="M0 4h7M4 1l3 3-3 3" /></Icon>,0</span></TwoLine></Tool>
                  </Row>
                </Column>
              </GroupBody>
              <GroupLabel>Número</GroupLabel>
            </Group>

            <Group $w={180}>
              <GroupBody $pad={8}>
                <Column $top={3}>
                  <Command><TableIcon><path d="M5.500 1.500h4v3h-4zM5.500 10.500h6v4h-6z" fill="#f4777f" stroke="#d13438" /><path d="M5 6h4v3H5z" fill={BLUE} stroke="none" /></TableIcon>Formatação Condicional<Chevron /></Command>
                  <Command><TableIcon><path d="M5 5h10v5H1V5z" fill="#83c1ee" stroke={BLUE} /><path d="M1 1.500h14" stroke={BLUE} strokeWidth="2" /><Brush /></TableIcon>Formatar como Tabela<Chevron /></Command>
                  <Command><TableIcon><path d="M5 5h8v8H5z" fill="#83c1ee" stroke={BLUE} /><Brush /></TableIcon>Estilos de Célula<Chevron /></Command>
                </Column>
              </GroupBody>
              <GroupLabel>Estilos</GroupLabel>
            </Group>

            <Group $w={99}>
              <GroupBody $pad={12}>
                <Column $top={3}>
                  <Command><TableIcon><path d="M6 5.500h9v4H6z" fill="#5fb0ea" stroke="#0f6cbd" /><path d="M.5 7.500H9M4 4 .5 7.500 4 11" stroke={BLUE} strokeWidth="1.5" /></TableIcon>Inserir<Chevron /></Command>
                  <Command><TableIcon><path d="M2 5.500h7v4H2z" fill="#5fb0ea" stroke="#0f6cbd" /><path d="m9.500 5 6 6M15.500 5l-6 6" stroke="#e8504f" strokeWidth="1.3" /></TableIcon>Excluir<Chevron /></Command>
                  <Command><TableIcon><path d="M5.500 4.500h6v5h-6z" fill="#2b88d8" stroke="#0f6cbd" /><path d="M4 1.500h8M4 0v3M12 0v3" stroke={BLUE} /></TableIcon>Formato<Chevron /></Command>
                </Column>
              </GroupBody>
              <GroupLabel>Células</GroupLabel>
            </Group>

            <Group $w={191}>
              <GroupBody $pad={8}>
                <Column $top={1}>
                  <Row><Tool aria-label="Soma"><Icon w={14} sw={1.2} stroke={INK}><path d="M12.500 3V1H1.500l6 6-6 6h11v-2" /></Icon></Tool><Tool $w={8} aria-label="Opções de soma"><Chevron /></Tool></Row>
                  <Row><Tool aria-label="Limpar"><Icon w={16}><path d="m9.500 1.500 5 4.500-7.500 8.500-5-4.500Z" fill="#fff" stroke="#8f3a9c" strokeWidth="1.2" /><path d="m5.500 6 5 4.500L7 14.500l-5-4.500Z" fill="#d59ddc" stroke="#8f3a9c" strokeWidth="1.2" /></Icon></Tool><Tool $w={8} aria-label="Opções de limpeza"><Chevron /></Tool></Row>
                </Column>
                <Big $w={78} $top={3}>
                  <Icon w={30} h={30} sw={1.2}>
                    <path d="M2 13 6.500 1.500 11 13M3.500 9.500h6" stroke={BLUE} />
                    <path d="M2.500 15.500h8l-8 11.500h8.500M13.500 8.500h15v1.500l-5.500 6v7h-4v-7l-5.500-6Z" stroke={INK} />
                  </Icon>
                  <span>Classificar e<br /><Inline>Filtrar<Chevron /></Inline></span>
                </Big>
                <Big $w={58} $top={3}>
                  <Icon w={30} h={30} sw={1.2} stroke={INK}><circle cx="19" cy="11" r="10" /><path d="M12 18 1 29" /></Icon>
                  <span>Localizar e<br /><Inline>Selecionar<Chevron /></Inline></span>
                </Big>
              </GroupBody>
              <GroupLabel>Editando</GroupLabel>
            </Group>

            <Group $w={90}>
              <GroupBody>
                <Big $w={90} $top={6}>
                  <Icon w={30} h={30} stroke="#d83b01" sw={1.2}><path d="M1.500 1.500h27v27h-27zM4.500 4.500h9v9h-9zM16.500 4.500h9v9h-9zM4.500 16.500h9v9h-9zM16.500 16.500h9v9h-9z" /></Icon>
                  Suplementos
                </Big>
              </GroupBody>
              <GroupLabel>Suplementos</GroupLabel>
            </Group>
            <Collapse aria-label="Recolher"><WideChevron /></Collapse>
          </RibbonBody>
        </Ribbon>

        <FormulaBar>
          <NameBox><input defaultValue="A2" aria-label="Caixa de nome" /><Chevron /></NameBox>
          <FxBox>
            <Tool $w={30} aria-label="Cancelar"><Icon w={14} stroke="#b3b0ad" sw={1.2}><path d="m1 1 12 12M13 1 1 13" /></Icon></Tool>
            <Tool $w={28} aria-label="Confirmar"><Icon w={16} stroke="#b3b0ad" sw={1.2}><path d="m.5 8.500 5 5 10-11" /></Icon></Tool>
            <Tool $w={28} aria-label="Inserir função"><FxLabel>fx</FxLabel></Tool>
          </FxBox>
          <FormulaInput><input defaultValue="teste" aria-label="Fórmula" /><WideChevron color={INK} /></FormulaInput>
        </FormulaBar>

        <GridArea>
          <GridClip>
            <Sheet>
              <thead>
                <tr>
                  <Corner><Icon w={15} stroke="none" fill="#b4b4b4"><path d="M15 0v15H0Z" /></Icon></Corner>
                  {columns.map((c) => <ColHead key={c} $on={c === 'A'}>{c}</ColHead>)}
                </tr>
              </thead>
              <tbody>
                {rows.map((r) => (
                  <tr key={r}>
                    <RowHead $on={r === 2}>{r}</RowHead>
                    {columns.map((c) => <Cell key={c} $on={c === 'A' && r === 2}>{cells[`${c}${r}`]}</Cell>)}
                  </tr>
                ))}
              </tbody>
            </Sheet>
          </GridClip>
          <VScroll>
            <ScrollButton aria-label="Para cima"><Icon w={8} stroke="none" fill="#666"><path d="M0 6 4 2l4 4Z" /></Icon></ScrollButton>
            <Thumb $vertical />
            <Spacer />
            <ScrollButton aria-label="Para baixo"><Icon w={8} stroke="none" fill="#666"><path d="m0 2 4 4 4-4Z" /></Icon></ScrollButton>
          </VScroll>
        </GridArea>
        <HScroll>
          <ScrollButton aria-label="Para a esquerda"><Icon w={8} stroke="none" fill="#666"><path d="M6 0 2 4l4 4Z" /></Icon></ScrollButton>
          <Thumb />
          <Spacer />
          <ScrollButton aria-label="Para a direita"><Icon w={8} stroke="none" fill="#666"><path d="m2 0 4 4-4 4Z" /></Icon></ScrollButton>
        </HScroll>

        <SheetTabs>
          <SheetTool $w={32} $dim aria-label="Anterior"><Icon w={10} sw={1.2}><path d="M7 .5 2.500 5 7 9.500" /></Icon></SheetTool>
          <SheetTool $w={33} $dim aria-label="Próxima"><Icon w={10} sw={1.2}><path d="M3 .5 7.500 5 3 9.500" /></Icon></SheetTool>
          <SheetTool $w={30} aria-label="Todas as planilhas"><Icon w={12} h={11}><path d="M0 1.500h12M0 5.500h12M0 9.500h12" /></Icon></SheetTool>
          <SheetTab>Planilha1</SheetTab>
          <SheetTool $w={49} aria-label="Nova planilha"><Icon w={11}><path d="M5.500 0v11M0 5.500h11" /></Icon></SheetTool>
        </SheetTabs>

        <StatusBar>
          <StatusButton>Modo de Cálculo: Automático</StatusButton>
          <StatusButton $gap={25}>Estatísticas de Pasta de Trabalho</StatusButton>
          <Spacer />
          <StatusButton aria-label="Opções"><Chevron /></StatusButton>
          <StatusButton $gap={44}>Fornecer Comentários à Microsoft</StatusButton>
          <StatusButton $gap={39} aria-label="Reduzir"><Icon w={12}><path d="M0 5.500h12" /></Icon></StatusButton>
          <StatusButton $gap={14}>100%</StatusButton>
          <StatusButton $gap={11} aria-label="Ampliar"><Icon w={12}><path d="M5.500 0v11M0 5.500h11" /></Icon></StatusButton>
        </StatusBar>
      </Content>
    </Workspace>

    <Taskbar>
      <StartButton aria-label="Iniciar">
        <Icon w={24} stroke="none">
          <defs><linearGradient id="win" x1="0" y1="0" x2="1" y2="1"><stop stopColor="#8fe3ff" /><stop offset="1" stopColor="#1197ee" /></linearGradient></defs>
          <path d="M1 1h10.500v10.500H1zM12.500 1H24v10.500H12.500zM1 12.500h10.500V24H1zM12.500 12.500H24V24H12.500z" fill="url(#win)" />
        </Icon>
      </StartButton>
      <TaskSearch>
        <Icon w={16} stroke="#e6dfe3" sw={1.6}><circle cx="6.800" cy="6.800" r="5.500" /><path d="m11 11 4 4" /></Icon>
        <input placeholder="Pesquisar" aria-label="Pesquisar no Windows" />
      </TaskSearch>
      <TaskApp aria-label="Explorador">
        <Icon w={24} stroke="none"><path d="M0 2h9l2 2v5H0z" fill="#e0a106" /><path d="M0 5h10l2-1h12v18H0z" fill="#ffd04c" /><path d="M4 22v-4q0-2 2-2h12q2 0 2 2v4z" fill="#0f6cc4" /><path d="M0 21.500h4v1H0zM20 21.500h4v1h-4z" fill="#e8a90c" /></Icon>
      </TaskApp>
      <TaskApp aria-label="Postman">
        <Icon w={24} stroke="none"><circle cx="12" cy="12" r="12" fill="#ff6c37" /><path d="m5 19 9-11 2.500 2.500Z" fill="#fff" /><circle cx="17" cy="7" r="2.400" fill="#fff" /></Icon>
      </TaskApp>
      <TaskApp aria-label="Slack">
        <Icon w={22} sw={2.6}>
          <circle cx="11" cy="11" r="11" fill="#fff" stroke="none" />
          <g strokeLinecap="round">
            <path d="M5 9.300h4M9.300 5v.1" stroke="#36c5f0" /><path d="M12.800 5v4.200M17 9.300h-.1" stroke="#2eb67d" />
            <path d="M12.800 12.800H17M12.800 17v-.1" stroke="#ecb22e" /><path d="M9.300 12.800V17M5 12.800h.1" stroke="#e01e5a" />
          </g>
        </Icon>
      </TaskApp>
      <TaskApp aria-label="VS Code">
        <Icon w={24} stroke="none"><path d="M18 0 24 2.500v19L18 24 6.500 13.500 2.500 17 0 15.500 4 12 0 8.500 2.500 7l4 3.500ZM18 6.500 10.500 12 18 17.500Z" fill="#1f8ad2" fillRule="evenodd" /><path d="m18 0 6 2.500v19L18 24Z" fill="#2fa8f3" /></Icon>
      </TaskApp>
      <TaskApp aria-label="Notepad++">
        <Icon w={24} stroke="none"><path d="M1 1h18v23H1z" fill="#f2f2ee" /><path d="M2 12c5-3 11-3 16-2v13H2z" fill="#86cf2b" /><path d="M6 8v7M10 9v2M13 9v2" stroke="#222" strokeWidth="1.5" /><path d="m22 1-7 14-1 4 3-2 7-14Z" fill="#f2a51f" /><path d="M3 3h14" stroke="#888" strokeDasharray="1 1" /></Icon>
      </TaskApp>
      <TaskApp $active aria-label="Opera GX"><OperaRing w={24} sw={1.4} /></TaskApp>
      <TaskApp aria-label="Discord">
        <Icon w={24} stroke="none"><circle cx="12" cy="12" r="12" fill="#5865f2" /><path d="M5 15.500C5 11.500 6 9 7.200 7.800c1-.6 2-.8 2.600-.8l.5.9h3.400l.5-.9c.6 0 1.600.2 2.600.8C18 9 19 11.500 19 15.500c-1 1-2.300 1.500-3.300 1.500l-.8-1.300H9.100L8.300 17C7.300 17 6 16.500 5 15.500Z" fill="#fff" /><circle cx="9.500" cy="12.500" r="1.500" fill="#5865f2" /><circle cx="14.500" cy="12.500" r="1.500" fill="#5865f2" /></Icon>
      </TaskApp>
      <TaskApp aria-label="WhatsApp">
        <Icon w={24} stroke="none"><path d="M0 24 1.700 17.800A12 12 0 1 1 6.200 22.400Z" fill="#fff" /><path d="m2.700 21.300 1.100-4A9.900 9.900 0 1 1 6.900 20.400Z" fill="#33c24e" /><path d="M8.500 6.300c-2 1-1.600 3.500.2 6s4 4.600 6.500 5c1.500.2 3-.8 3-2.300l-3-1.500-1.200 1.500c-2-.8-3.300-2-4.300-4l1-1.300Z" fill="#fff" /></Icon>
      </TaskApp>
      <TaskApp aria-label="Teams">
        <Icon w={26} h={24} stroke="none"><circle cx="15" cy="5" r="3.500" fill="#7b83eb" /><path d="M19 9h6v7a4 4 0 0 1-6 3z" fill="#5059c9" /><path d="M9 9h12v9a6 6 0 0 1-12 2z" fill="#7b83eb" /><path d="M1 6h12v12H1z" fill="#4b53bc" /><path d="M4 9.500h6M7 9.500V15" stroke="#fff" strokeWidth="1.5" /></Icon>
        <AlertBadge>1</AlertBadge>
      </TaskApp>
      <Tray>
        <TrayButton $w={32} aria-label="Ícones ocultos"><Icon w={12} stroke="#fff" sw={1.5}><path d="m1 9 5-5 5 5" /></Icon></TrayButton>
        <TrayButton $w={32} aria-label="Pena"><Icon w={16} stroke="none"><path d="M1 15C2 8 8 3 15 .5c0 5-4 9-9 11Z" fill="#a56bd0" /><path d="M1 15 14 2" stroke="#dcc0ee" /></Icon></TrayButton>
        <TrayButton $w={32} aria-label="Microfone"><Icon w={16} stroke="#8bd0ee" sw={1.3}><rect x="5.500" y=".7" width="5" height="9" rx="2.500" fill="#3f7f9f" /><path d="M2.500 7c0 7 11 7 11 0M8 12.500V16" /></Icon></TrayButton>
        <TrayText $w={44}>POR<br />PTB2</TrayText>
        <TrayButton $w={32} aria-label="Wi-Fi"><Icon w={16} stroke="#fff" sw={1.3}><path d="M.7 6.500c4-4.500 10.600-4.500 14.600 0M3 9c3-3 7-3 10 0M5.200 11.300c1.600-1.600 4-1.600 5.600 0" /><circle cx="8" cy="13" r="1.200" fill="#fff" stroke="none" /></Icon></TrayButton>
        <TrayButton $w={16} aria-label="Som"><Icon w={16} stroke="#fff" sw={1.1}><path d="M1 6h2.500L7 2.500v11L3.500 10H1ZM9 6c1 1 1 3 0 4M11 4c2 2 2 6 0 8M13 2.500c3 3 3 8 0 11" /></Icon></TrayButton>
        <TrayButton $w={32} aria-label="Bateria"><Icon w={16} stroke="#fff" sw={1.2}><rect x="2.500" y="4" width="11.500" height="8.500" rx="1.500" /><path d="M4.500 6h8v4.500h-8z" fill="#fff" stroke="none" /><path d="M15.500 7v2.500" /><path d="M4 0 0 5h3L1.500 9 6 4H3.500Z" fill="#fff" stroke="none" /></Icon></TrayButton>
        <TrayText $w={71} $right>12:11<br />29/09/2023</TrayText>
        <Count>18</Count>
      </Tray>
    </Taskbar>
  </Screen>
);

export default App;
